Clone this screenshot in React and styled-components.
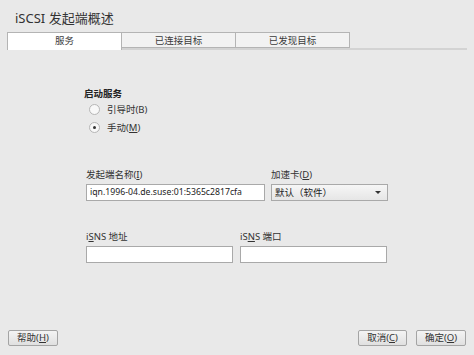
import React from 'react'
import styled, { createGlobalStyle } from 'styled-components'

const Global = createGlobalStyle`
  html, body { margin: 0; padding: 0; background: #e9e9e9; }
  body { font-family: "Noto Sans", "Noto Sans CJK SC", sans-serif; color: #2e2e2e; }
`

const Window = styled.div`
  width: 474px;
  height: 355px;
  display: flex;
  flex-direction: column;
  background: #e9e9e9;
  box-sizing: border-box;
  overflow: hidden;
`

const Title = styled.div`
  height: 32px;
  padding-left: 15px;
  box-sizing: border-box;
  padding-top: 9px;
  font-size: 13px;
  line-height: 18px;
  color: #333;
`

const TabBar = styled.div`
  display: flex;
  margin: 0 7px;
  height: 18px;
  border-bottom: 2px solid #d3d3d3;
  box-sizing: border-box;
`

const Tab = styled.div`
  width: 115px;
  height: ${p => (p.active ? '18px' : '16px')};
  box-sizing: border-box;
  border: 1px solid #b4b4b4;
  border-bottom: ${p => (p.active ? 'none' : '1px solid #b4b4b4')};
  margin-left: ${p => (p.first ? 0 : '-1px')};
  background: ${p => (p.active ? '#fff' : '#f2f2f2')};
  font-size: 9.5px;
  line-height: 15px;
  text-align: center;
  color: #3a3a3a;
  position: relative;
  z-index: ${p => (p.active ? 1 : 0)};
`

const Body = styled.div`
  flex: 1;
  padding: 38px 0 0 84px;
  display: flex;
  flex-direction: column;
`

const Section = styled.div`
  font-size: 9.5px;
  font-weight: bold;
  line-height: 12px;
  color: #222;
`

const RadioRow = styled.label`
  display: flex;
  align-items: center;
  gap: 7px;
  margin-left: 5px;
  height: 18px;
  font-size: 9.5px;
  color: #333;
`

const Radio = styled.span`
  width: 9px;
  height: 9px;
  border-radius: 50%;
  border: 1px solid #b6b6b6;
  background: #f8f8f8;
  display: flex;
  align-items: center;
  justify-content: center;
  &::after {
    content: '';
    width: 3px;
    height: 3px;
    border-radius: 50%;
    background: ${p => (p.checked ? '#333' : 'transparent')};
  }
`

const Row = styled.div`
  display: flex;
  gap: ${p => p.gap || 6}px;
  margin-top: ${p => p.top}px;
  margin-left: 2px;
`

const Field = styled.div`
  display: flex;
  flex-direction: column;
  width: ${p => p.w}px;
`

const Label = styled.div`
  font-size: 9.5px;
  line-height: 13px;
  height: 14px;
  color: #333;
  u { text-decoration: underline; }
`

const Input = styled.div`
  height: 17px;
  box-sizing: border-box;
  border: 1px solid #a9a9a9;
  background: #fff;
  font-size: 8.7px;
  line-height: 15px;
  padding-left: 3px;
  color: #222;
  margin-top: 2px;
  white-space: nowrap;
  overflow: hidden;
`

const Select = styled.div`
  height: 17px;
  box-sizing: border-box;
  border: 1px solid #a9a9a9;
  background: linear-gradient(#f6f6f6, #e6e6e6);
  font-size: 9.5px;
  line-height: 15px;
  padding: 0 6px 0 3px;
  color: #222;
  margin-top: 2px;
  display: flex;
  justify-content: space-between;
  align-items: center;
`

const Arrow = styled.span`
  width: 0;
  height: 0;
  border-left: 3px solid transparent;
  border-right: 3px solid transparent;
  border-top: 3px solid #333;
`

const Footer = styled.div`
  display: flex;
  align-items: center;
  padding: 0 8px 9px 8px;
  gap: 9px;
`

const Spacer = styled.div`
  flex: 1;
`

const Button = styled.div`
  width: ${p => p.w}px;
  height: 16px;
  box-sizing: border-box;
  border: 1px solid #a4a4a4;
  border-radius: 2px;
  background: linear-gradient(#f4f4f4, #e0e0e0);
  font-size: 9.5px;
  line-height: 14px;
  text-align: center;
  color: #333;
`

export default function App() {
  return (
    <Window>
      <Global />
      <Title>iSCSI 发起端概述</Title>
      <TabBar>
        <Tab first active>服务</Tab>
        <Tab>已连接目标</Tab>
        <Tab>已发现目标</Tab>
      </TabBar>
      <Body>
        <Section>启动服务</Section>
        <RadioRow>
          <Radio />
          <span>引导时(B)</span>
        </RadioRow>
        <RadioRow>
          <Radio checked />
          <span>手动(<u>M</u>)</span>
        </RadioRow>
        <Row top={32} gap={6}>
          <Field w={179}>
            <Label>发起端名称(<u>I</u>)</Label>
            <Input>iqn.1996-04.de.suse:01:5365c2817cfa</Input>
          </Field>
          <Field w={117}>
            <Label>加速卡(<u>D</u>)</Label>
            <Select>
              默认（软件）
              <Arrow />
            </Select>
          </Field>
        </Row>
        <Row top={29} gap={7}>
          <Field w={147}>
            <Label>i<u>S</u>NS 地址</Label>
            <Input />
          </Field>
          <Field w={147}>
            <Label>iS<u>N</u>S 端口</Label>
            <Input />
          </Field>
        </Row>
      </Body>
      <Footer>
        <Button w={50}>帮助(<u>H</u>)</Button>
        <Spacer />
        <Button w={49}>取消(<u>C</u>)</Button>
        <Button w={50}>确定(<u>O</u>)</Button>
      </Footer>
    </Window>
  )
}
